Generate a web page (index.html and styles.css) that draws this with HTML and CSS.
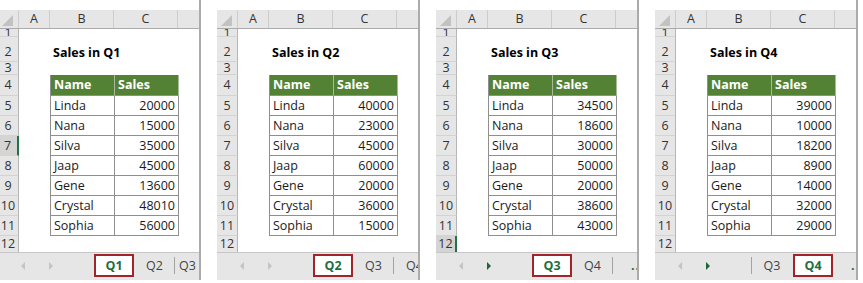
FILE: index.html
```html
<!DOCTYPE html>
<html lang="en">
<head>
<meta charset="utf-8">
<title>Sales by quarter</title>
<link rel="stylesheet" href="styles.css">
</head>
<body>
<div class="sheets">

  <section class="panel">
    <div class="formula"></div>
    <div class="hdr"><div class="corner"></div><div>A</div><div>B</div><div>C</div><div></div></div>
    <div class="body">
      <div class="rows">
        <div class="rh h8">1</div><div class="rh h25">2</div><div class="rh h13">3</div><div class="rh h21">4</div>
        <div class="rh">5</div><div class="rh">6</div><div class="rh sel">7</div><div class="rh">8</div>
        <div class="rh">9</div><div class="rh">10</div><div class="rh">11</div><div class="rh h16">12</div>
      </div>
      <div class="area">
        <div class="gap1"></div>
        <div class="title">Sales in Q1</div>
        <div class="gap3"></div>
        <div class="data">
          <div class="th">Name</div><div class="th">Sales</div>
          <div>Linda</div><div class="num">20000</div>
          <div>Nana</div><div class="num">15000</div>
          <div>Silva</div><div class="num">35000</div>
          <div>Jaap</div><div class="num">45000</div>
          <div>Gene</div><div class="num">13600</div>
          <div>Crystal</div><div class="num">48010</div>
          <div>Sophia</div><div class="num">56000</div>
        </div>
      </div>
    </div>
    <div class="tabs">
      <div class="nav"><span class="arr l"></span><span class="arr r"></span></div>
      <div class="tab active">Q1</div>
      <div class="tab sep">Q2</div>
      <div class="tab tight">Q3</div>
    </div>
  </section>

  <section class="panel">
    <div class="formula"></div>
    <div class="hdr"><div class="corner"></div><div>A</div><div>B</div><div>C</div><div></div></div>
    <div class="body">
      <div class="rows">
        <div class="rh h8">1</div><div class="rh h25">2</div><div class="rh h13">3</div><div class="rh h21">4</div>
        <div class="rh">5</div><div class="rh">6</div><div class="rh">7</div><div class="rh">8</div>
        <div class="rh">9</div><div class="rh">10</div><div class="rh">11</div><div class="rh h16">12</div>
      </div>
      <div class="area">
        <div class="gap1"></div>
        <div class="title">Sales in Q2</div>
        <div class="gap3"></div>
        <div class="data">
          <div class="th">Name</div><div class="th">Sales</div>
          <div>Linda</div><div class="num">40000</div>
          <div>Nana</div><div class="num">23000</div>
          <div>Silva</div><div class="num">45000</div>
          <div>Jaap</div><div class="num">60000</div>
          <div>Gene</div><div class="num">20000</div>
          <div>Crystal</div><div class="num">36000</div>
          <div>Sophia</div><div class="num">15000</div>
        </div>
      </div>
    </div>
    <div class="tabs">
      <div class="nav"><span class="arr l"></span><span class="arr r"></span></div>
      <div class="tab active">Q2</div>
      <div class="tab sep">Q3</div>
      <div class="tab">Q4</div>
    </div>
  </section>

  <section class="panel">
    <div class="formula"></div>
    <div class="hdr"><div class="corner"></div><div>A</div><div>B</div><div>C</div><div></div></div>
    <div class="body">
      <div class="rows">
        <div class="rh h8">1</div><div class="rh h25">2</div><div class="rh h13">3</div><div class="rh h21">4</div>
        <div class="rh">5</div><div class="rh">6</div><div class="rh">7</div><div class="rh">8</div>
        <div class="rh">9</div><div class="rh">10</div><div class="rh">11</div><div class="rh h16 sel">12</div>
      </div>
      <div class="area">
        <div class="gap1"></div>
        <div class="title">Sales in Q3</div>
        <div class="gap3"></div>
        <div class="data">
          <div class="th">Name</div><div class="th">Sales</div>
          <div>Linda</div><div class="num">34500</div>
          <div>Nana</div><div class="num">18600</div>
          <div>Silva</div><div class="num">30000</div>
          <div>Jaap</div><div class="num">50000</div>
          <div>Gene</div><div class="num">20000</div>
          <div>Crystal</div><div class="num">38600</div>
          <div>Sophia</div><div class="num">43000</div>
        </div>
      </div>
    </div>
    <div class="tabs">
      <div class="nav"><span class="arr l"></span><span class="arr r on"></span></div>
      <div class="tab active">Q3</div>
      <div class="tab sep">Q4</div>
      <div class="more">...</div>
    </div>
  </section>

  <section class="panel">
    <div class="formula"></div>
    <div class="hdr"><div class="corner"></div><div>A</div><div>B</div><div>C</div><div></div></div>
    <div class="body">
      <div class="rows">
        <div class="rh h8">1</div><div class="rh h25">2</div><div class="rh h13">3</div><div class="rh h21">4</div>
        <div class="rh">5</div><div class="rh">6</div><div class="rh">7</div><div class="rh">8</div>
        <div class="rh">9</div><div class="rh">10</div><div class="rh">11</div><div class="rh h16">12</div>
      </div>
      <div class="area">
        <div class="gap1"></div>
        <div class="title">Sales in Q4</div>
        <div class="gap3"></div>
        <div class="data">
          <div class="th">Name</div><div class="th">Sales</div>
          <div>Linda</div><div class="num">39000</div>
          <div>Nana</div><div class="num">10000</div>
          <div>Silva</div><div class="num">18200</div>
          <div>Jaap</div><div class="num">8900</div>
          <div>Gene</div><div class="num">14000</div>
          <div>Crystal</div><div class="num">32000</div>
          <div>Sophia</div><div class="num">29000</div>
        </div>
      </div>
    </div>
    <div class="tabs">
      <div class="nav"><span class="arr l"></span><span class="arr r on"></span></div>
      <div class="tab sepl">Q3</div>
      <div class="tab active">Q4</div>
      <div class="more">...</div>
    </div>
  </section>

</div>
</body>
</html>
```

FILE: styles.css
```css
* { box-sizing: border-box; }

body {
  margin: 0;
  background: #fff;
  font-family: "Open Sans", "Liberation Sans", sans-serif;
  font-size: 12.5px;
  line-height: 16px;
  color: #1a1a1a;
}

.sheets {
  display: flex;
  gap: 16px;
  margin-left: -2px;
}

.panel {
  flex: none;
  width: 203px;
  height: 280px;
  display: flex;
  flex-direction: column;
  border-right: 2px solid #ababab;
  overflow: hidden;
}

.formula { height: 10px; flex: none; }

/* column headers */
.hdr {
  flex: none;
  height: 19px;
  display: grid;
  grid-template-columns: 21px 31px 64px 64px 1fr;
  background: #e6e6e6;
  border-bottom: 1px solid #ababab;
}
.hdr > div {
  display: flex;
  align-items: center;
  justify-content: center;
  border-right: 1px solid #cdcdcd;
  color: #333;
}
.hdr > div:last-child { border-right: none; }

.corner { position: relative; }
.corner::after {
  content: "";
  position: absolute;
  right: 5px;
  bottom: 2px;
  width: 11px;
  height: 11px;
  background: #c2c2c2;
  clip-path: polygon(100% 0, 100% 100%, 0 100%);
}

/* sheet body */
.body {
  flex: none;
  height: 223px;
  display: flex;
}

.rows {
  flex: none;
  width: 21px;
  display: flex;
  flex-direction: column;
  background: #e6e6e6;
}
.rh {
  flex: none;
  height: 20px;
  display: flex;
  align-items: center;
  justify-content: center;
  overflow: hidden;
  color: #333;
  border-right: 1px solid #b5b5b5;
  border-bottom: 1px solid #d3d3d3;
}
.rh.h8 { height: 8px; }
.rh.h13 { height: 13px; }
.rh.h21 { height: 21px; }
.rh.h16 { height: 16px; border-bottom: none; }
.rh.h25 { height: 25px; align-items: flex-end; padding-bottom: 1px; }
.rh.sel {
  background: #d4d4d4;
  border-right: 2px solid #217346;
}

.area {
  flex: 1;
  display: flex;
  flex-direction: column;
  padding-left: 31px;
}
.gap1 { height: 8px; flex: none; }
.gap3 { height: 13px; flex: none; }
.title {
  flex: none;
  height: 25px;
  display: flex;
  align-items: flex-end;
  padding: 0 0 1px 3px;
  font-weight: 700;
  color: #000;
  white-space: nowrap;
}

.data {
  display: grid;
  grid-template-columns: 64px 64px;
  width: 129px;
  border-left: 1px solid #8f8f8f;
}
.data > div {
  height: 20px;
  display: flex;
  align-items: center;
  padding: 0 3px;
  border-right: 1px solid #8f8f8f;
  border-bottom: 1px solid #8f8f8f;
  white-space: nowrap;
}
.data > .th {
  height: 21px;
  background: #548235;
  color: #fff;
  font-weight: 700;
  border-right-color: #a9b99c;
}
.data > .th:last-child { border-right-color: #8f8f8f; }
.data > .num { justify-content: flex-end; }

/* sheet tabs */
.tabs {
  flex: none;
  height: 28px;
  display: flex;
  align-items: flex-start;
  background: #e6e6e6;
  border-top: 1px solid #c6c6c6;
  white-space: nowrap;
}
.nav {
  flex: none;
  width: 96px;
  height: 26px;
  display: flex;
  align-items: center;
  gap: 24px;
  padding-left: 23px;
}
.arr {
  width: 0;
  height: 0;
  border-top: 4px solid transparent;
  border-bottom: 4px solid transparent;
}
.arr.l { border-right: 4px solid #c4c4c4; }
.arr.r { border-left: 4px solid #c4c4c4; }
.arr.r.on { border-left-color: #1d6537; }

.tab {
  flex: none;
  position: relative;
  width: 41px;
  height: 26px;
  display: flex;
  align-items: center;
  justify-content: center;
  color: #444;
}
.tab.sep::after {
  content: "";
  position: absolute;
  right: 0;
  top: 4px;
  height: 17px;
  width: 1px;
  background: #a3a3a3;
}
.tab.sepl { width: 42px; }
.tab.sepl::before {
  content: "";
  position: absolute;
  left: 0;
  top: 4px;
  height: 17px;
  width: 1px;
  background: #a3a3a3;
}
.tab.tight { justify-content: flex-start; padding-left: 4px; }
.tab.active {
  width: 40px;
  height: 23px;
  margin-top: 1px;
  background: #fff;
  border: 2px solid #a2242b;
  color: #1f6e3e;
  font-weight: 700;
}
.more {
  flex: none;
  height: 26px;
  display: flex;
  align-items: center;
  padding-left: 18px;
  color: #1f6e3e;
  font-weight: 700;
  letter-spacing: 1px;
}
```
